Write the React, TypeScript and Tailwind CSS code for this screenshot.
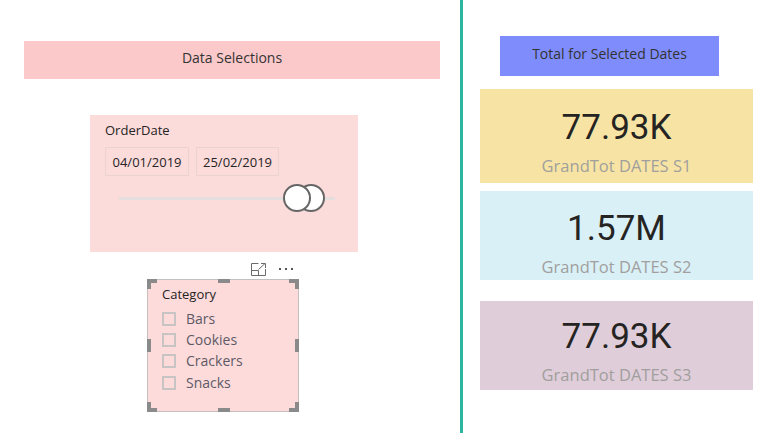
import React from "react";

const items = ["Bars", "Cookies", "Crackers", "Snacks"];

function ExpandIcon() {
  return (
    <svg width="15" height="13" viewBox="0 0 15 13" fill="none" stroke="#6b6b6b" strokeWidth="1">
      <path d="M7.5 0.5 H0.5 V12.5 H14.5 V6" />
      <path d="M0.5 7.5 H7.5 V12.5" />
      <path d="M7.5 6.5 L14 0.5" />
      <path d="M10 0.5 H14.5 V5" />
    </svg>
  );
}

function Card({ value, label, bg, h, pt }: { value: string; label: string; bg: string; h: string; pt: string }) {
  return (
    <div className={`w-[273px] ${h} ${bg} ${pt} flex flex-col items-center`}>
      <div className="font-['Roboto',sans-serif] text-[35px] leading-[35px] text-[#252423]">{value}</div>
      <div className="mt-[12px] text-[16.5px] leading-[17px] text-[#a19f9d]">{label}</div>
    </div>
  );
}

export default function App() {
  return (
    <div className="w-[763px] h-[443px] bg-white flex overflow-hidden font-['Open_Sans',sans-serif] text-[#252423]">
      {/* Left column */}
      <div className="w-[460px] flex flex-col">
        <div className="mt-[41px] ml-[24px] w-[416px] h-[38px] bg-[#fcc9ca] flex items-center justify-center pb-[4px] text-[14px] leading-[16px] text-[#333]">
          Data Selections
        </div>

        <div className="mt-[36px] ml-[90px] w-[268px] h-[137px] bg-[#fcdbdb] pt-[7px] pl-[15px]">
          <div className="text-[13px] leading-[16px] text-[#252423]">OrderDate</div>
          <div className="mt-[9px] flex gap-[7px]">
            <div className="w-[84px] h-[29px] border border-[#ebd3d3] flex items-center justify-center text-[13px] leading-[16px]">
              04/01/2019
            </div>
            <div className="w-[83px] h-[29px] border border-[#ebd3d3] flex items-center justify-center text-[13px] leading-[16px]">
              25/02/2019
            </div>
          </div>
          <div className="relative mt-[8px] ml-[14px] w-[216px] h-[28px] flex items-center">
            <div className="w-full h-[3px] bg-[#e4dede]" />
            <div className="absolute left-[178px] top-0 w-[28px] h-[28px] rounded-full bg-white border-2 border-[#666]" />
            <div className="absolute left-[164px] top-0 w-[28px] h-[28px] rounded-full bg-white border-2 border-[#666]" />
          </div>
        </div>

        <div className="mt-[8px] ml-[147px] w-[152px]">
          <div className="h-[19px] flex items-center justify-end pr-[6px] gap-[13px]">
            <ExpandIcon />
            <div className="flex gap-[4px] mb-[1px]">
              <div className="w-[2px] h-[2px] bg-[#555]" />
              <div className="w-[2px] h-[2px] bg-[#555]" />
              <div className="w-[2px] h-[2px] bg-[#555]" />
            </div>
          </div>
          <div className="relative h-[133px] bg-[#fddbdb] border border-[#c4c0c0] pt-[6px] pl-[14px]">
            <div className="text-[13px] leading-[16px] text-[#252423]">Category</div>
            <div className="mt-[6px] flex flex-col">
              {items.map((it) => (
                <div key={it} className="h-[21.3px] flex items-center">
                  <div className="w-[14px] h-[14px] border-2 border-[#c8c4c4]" />
                  <div className="ml-[10px] text-[14px] leading-[16px] text-[#5d5a66]">{it}</div>
                </div>
              ))}
            </div>
            {/* selection handles */}
            <div className="absolute -left-[1px] -top-[1px] w-[10px] h-[4px] bg-[#8a8a8a]" />
            <div className="absolute -left-[1px] -top-[1px] w-[4px] h-[10px] bg-[#8a8a8a]" />
            <div className="absolute -right-[1px] -top-[1px] w-[10px] h-[4px] bg-[#8a8a8a]" />
            <div className="absolute -right-[1px] -top-[1px] w-[4px] h-[10px] bg-[#8a8a8a]" />
            <div className="absolute -left-[1px] -bottom-[1px] w-[10px] h-[4px] bg-[#8a8a8a]" />
            <div className="absolute -left-[1px] -bottom-[1px] w-[4px] h-[10px] bg-[#8a8a8a]" />
            <div className="absolute -right-[1px] -bottom-[1px] w-[10px] h-[4px] bg-[#8a8a8a]" />
            <div className="absolute -right-[1px] -bottom-[1px] w-[4px] h-[10px] bg-[#8a8a8a]" />
            <div className="absolute left-[70px] -top-[1px] w-[12px] h-[4px] bg-[#8a8a8a]" />
            <div className="absolute left-[70px] -bottom-[1px] w-[12px] h-[4px] bg-[#8a8a8a]" />
            <div className="absolute -left-[1px] top-[59px] w-[4px] h-[13px] bg-[#8a8a8a]" />
            <div className="absolute -right-[1px] top-[59px] w-[4px] h-[13px] bg-[#8a8a8a]" />
          </div>
        </div>
      </div>

      {/* Divider */}
      <div className="w-[3px] h-[433px] bg-[#2bb5a2]" />

      {/* Right column */}
      <div className="flex-1 flex flex-col">
        <div className="mt-[36px] ml-[37px] w-[219px] h-[40px] bg-[#7f8cfb] flex items-center justify-center pb-[5px] text-[14px] leading-[16px] text-[#333]">
          Total for Selected Dates
        </div>
        <div className="mt-[13px] ml-[17px] flex flex-col">
          <Card value="77.93K" label="GrandTot DATES S1" bg="bg-[#f7e4a4]" h="h-[94px]" pt="pt-[21px]" />
          <div className="h-[8px]" />
          <Card value="1.57M" label="GrandTot DATES S2" bg="bg-[#d9f0f7]" h="h-[89px]" pt="pt-[20px]" />
          <div className="h-[21px]" />
          <Card value="77.93K" label="GrandTot DATES S3" bg="bg-[#dfcdd9]" h="h-[89px]" pt="pt-[18px]" />
        </div>
      </div>
    </div>
  );
}
